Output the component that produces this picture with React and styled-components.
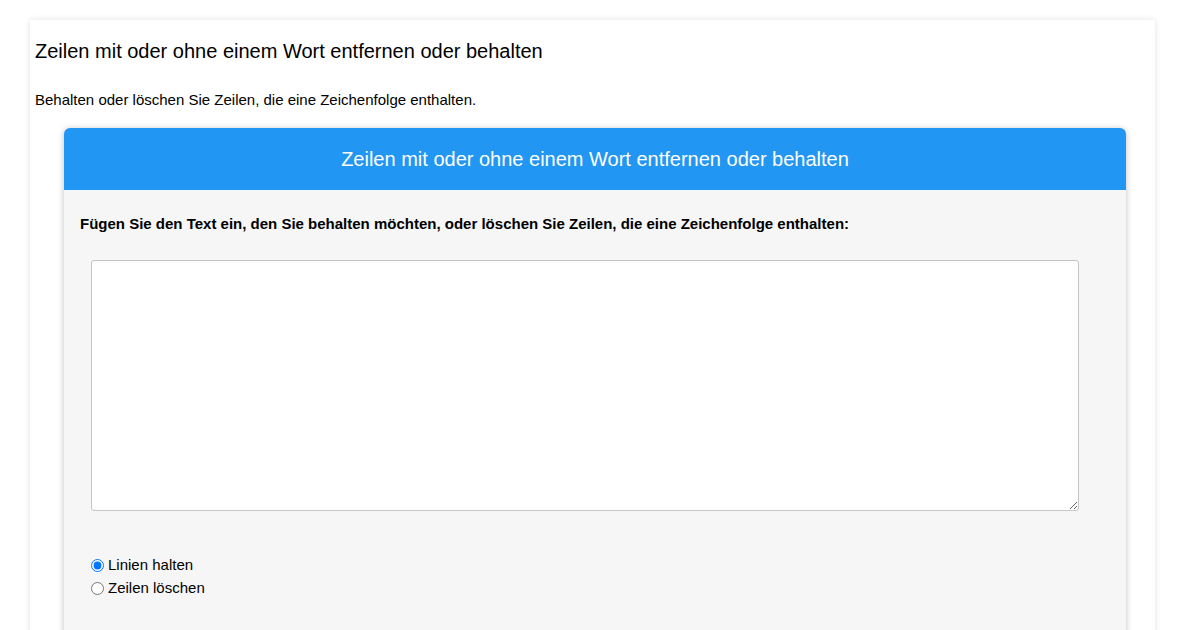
import React from 'react';
import styled, { createGlobalStyle } from 'styled-components';

const Global = createGlobalStyle`
  html { overflow-y: scroll; }
  body {
    margin: 0;
    background: #ffffff;
    font-family: "Liberation Sans", Arial, sans-serif;
    color: #000;
  }
`;

const Page = styled.div`
  padding: 20px 45px 40px 30px;
`;

const Sheet = styled.div`
  background: #fff;
  box-shadow: 0 0 6px rgba(0, 0, 0, 0.12);
  padding: 18px 5px 60px;
`;

const Title = styled.h1`
  font-size: 20px;
  font-weight: normal;
  margin: 0 0 26px;
  line-height: 26px;
`;

const Lead = styled.p`
  font-size: 15px;
  margin: 0 0 18px;
  line-height: 20px;
`;

const Card = styled.div`
  margin: 0 24px 0 29px;
  border-radius: 6px;
  overflow: hidden;
  background: #f6f6f6;
  box-shadow: 0 1px 6px rgba(0, 0, 0, 0.25);
`;

const CardHead = styled.div`
  background: #2196f3;
  color: #fff;
  font-size: 20px;
  height: 62px;
  display: flex;
  align-items: center;
  justify-content: center;
`;

const CardBody = styled.div`
  padding: 24px 16px 120px;
`;

const Label = styled.div`
  font-size: 15px;
  font-weight: bold;
  line-height: 20px;
  margin-bottom: 26px;
`;

const Area = styled.textarea`
  display: block;
  margin-left: 11px;
  width: 988px;
  height: 251px;
  box-sizing: border-box;
  border: 1px solid #c4c4c4;
  border-radius: 3px;
  background: #fff;
  margin-bottom: 44px;
`;

const Options = styled.div`
  margin-left: 11px;
  display: flex;
  flex-direction: column;
  gap: 3px;
`;

const Option = styled.label`
  display: flex;
  align-items: center;
  font-size: 15px;
  line-height: 20px;
  input { margin: 0 4px 0 0; width: 13px; height: 13px; }
`;

export default function App() {
  return (
    <>
      <Global />
      <Page>
        <Sheet>
          <Title>Zeilen mit oder ohne einem Wort entfernen oder behalten</Title>
          <Lead>Behalten oder löschen Sie Zeilen, die eine Zeichenfolge enthalten.</Lead>
          <Card>
            <CardHead>Zeilen mit oder ohne einem Wort entfernen oder behalten</CardHead>
            <CardBody>
              <Label>
                Fügen Sie den Text ein, den Sie behalten möchten, oder löschen Sie Zeilen, die eine Zeichenfolge enthalten:
              </Label>
              <Area />
              <Options>
                <Option><input type="radio" name="m" defaultChecked />Linien halten</Option>
                <Option><input type="radio" name="m" />Zeilen löschen</Option>
              </Options>
            </CardBody>
          </Card>
        </Sheet>
      </Page>
    </>
  );
}
